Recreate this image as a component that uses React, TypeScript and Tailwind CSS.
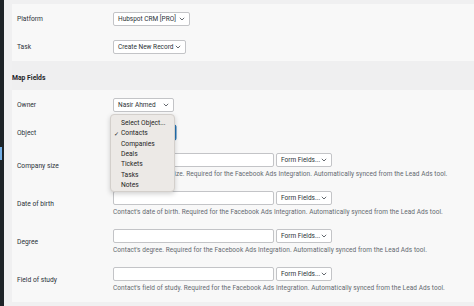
import React from "react";

const font = { fontFamily: "Roboto, 'Liberation Sans', sans-serif" };

function Chevron() {
  return (
    <svg width="6" height="4" viewBox="0 0 6 4" className="shrink-0">
      <path d="M0.8 0.8L3 3L5.2 0.8" stroke="#3c434a" strokeWidth="0.8" fill="none" />
    </svg>
  );
}

function Select({ label, width, focus }: { label: string; width: string; focus?: boolean }) {
  return (
    <div
      className={`flex items-center justify-between h-[14px] bg-white rounded-[2px] pl-[4px] pr-[4px] text-[6.5px] text-[#2c3338] ${width} ${
        focus ? "border border-[#2271b1] shadow-[0_0_0_0.5px_#2271b1]" : "border border-[#c3c4c7]"
      }`}
    >
      <span className="whitespace-nowrap leading-none">{label}</span>
      <Chevron />
    </div>
  );
}

const objects = ["Select Object...", "Contacts", "Companies", "Deals", "Tickets", "Tasks", "Notes"];

function ObjectMenu() {
  return (
    <div className="absolute left-[-3px] top-[-11px] w-[65px] h-[78px] rounded-[4px] bg-[#ece9e6] border border-[#d3cfcb] shadow-[0_2px_5px_rgba(0,0,0,0.18)] pt-[3px] z-10">
      {objects.map((o) => (
        <div key={o} className="flex items-center h-[10.4px] text-[6.7px] text-[#1e1e1e] leading-none">
          <span className="w-[10px] pl-[3px] text-[6px]">{o === "Contacts" ? "✓" : ""}</span>
          <span className="whitespace-nowrap">{o}</span>
        </div>
      ))}
    </div>
  );
}

const fields = [
  { label: "Company size", desc: "Contact's company size." },
  { label: "Date of birth", desc: "Contact's date of birth." },
  { label: "Degree", desc: "Contact's degree." },
  { label: "Field of study", desc: "Contact's field of study." },
];

export default function App() {
  return (
    <div className="flex w-[474px] h-[306px] overflow-hidden bg-[#f0f0f1]" style={font}>
      {/* admin menu edge */}
      <div className="w-[4px] shrink-0 bg-[#1d2327] flex flex-col">
        <div className="h-[147px]" />
        <div className="h-[13px] w-[2px] bg-[#72aee6]" />
      </div>

      <div className="flex-1 pl-[8px] pt-[4px]">
        {/* integration settings */}
        <div className="bg-[#f8f8f8] pl-[5px] pt-[8px] pb-[7px] flex flex-col gap-[14px]">
          <div className="flex items-center">
            <div className="w-[96px] text-[6.7px] text-[#2c3338]">Platform</div>
            <Select label="Hubspot CRM [PRO]" width="w-[77px]" />
          </div>
          <div className="flex items-center">
            <div className="w-[96px] text-[6.7px] text-[#2c3338]">Task</div>
            <Select label="Create New Record" width="w-[73px]" />
          </div>
        </div>

        {/* section header */}
        <div className="h-[29px] flex items-center pt-[5px] text-[6.8px] font-bold text-[#1d2327] bg-[#efeff0]">
          Map Fields
        </div>

        {/* map fields */}
        <div className="bg-[#f8f8f8] pl-[5px] pt-[8px] pb-[9px]">
          <div className="flex items-center">
            <div className="w-[96px] text-[6.7px] text-[#2c3338]">Owner</div>
            <Select label="Nasir Ahmed" width="w-[61px]" />
          </div>
          <div className="flex items-center mt-[13px]">
            <div className="w-[96px] text-[6.7px] text-[#2c3338] pt-[1px]">Object</div>
            <div className="relative">
              <Select label="" width="w-[63px] h-[15px]" focus />
              <ObjectMenu />
            </div>
          </div>

          <div className="flex flex-col gap-[12px] mt-[13px]">
            {fields.map((f) => (
              <div key={f.label} className="flex">
                <div className="w-[96px] pt-[9px] text-[6.7px] text-[#2c3338] leading-[8px]">{f.label}</div>
                <div className="flex flex-col">
                  <div className="flex gap-[2px]">
                    <div className="w-[161px] h-[14px] bg-white border border-[#c3c4c7] rounded-[2px]" />
                    <Select label="Form Fields..." width="w-[56px]" />
                  </div>
                  <div className="mt-[3px] text-[6.5px] tracking-[0.06px] leading-[9px] text-[#646970] whitespace-nowrap">
                    {f.desc} Required for the Facebook Ads Integration. Automatically synced from the Lead Ads tool.
                  </div>
                </div>
              </div>
            ))}
          </div>
        </div>
      </div>
    </div>
  );
}
